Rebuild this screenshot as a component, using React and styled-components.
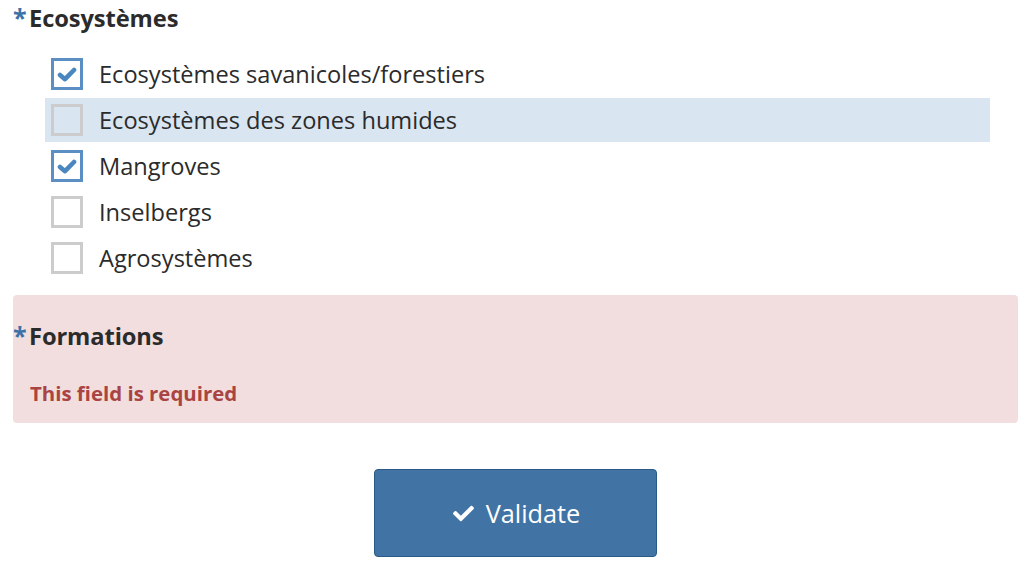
import React from "react";
import styled, { createGlobalStyle } from "styled-components";
import { FaCheck } from "react-icons/fa";

const GlobalStyle = createGlobalStyle`
    body {
        margin: 0;
        background: #fff;
        font-family: "Open Sans", "Noto Sans", sans-serif;
        color: #2b2b2b;
    }
`;

const Page = styled.div`
    padding: 0 6px 0 13px;
`;

const FieldLabel = styled.div`
    display: flex;
    align-items: baseline;
    height: 34px;
    font-size: 23.7px;
    font-weight: 700;
    line-height: 34px;
    letter-spacing: -0.1px;
    color: #2b2b2b;
`;

const Star = styled.span`
    color: #3a73a9;
    font-size: 25px;
    width: 17px;
    margin-right: -1px;
`;

const OptionList = styled.div`
    display: flex;
    flex-direction: column;
    gap: 2px;
    margin: 18px 28px 0 32px;
`;

const Option = styled.label`
    display: flex;
    align-items: center;
    height: 44px;
    padding-left: 6px;
    background: ${props => (props.highlighted ? "#d9e5f0" : "transparent")};
    font-size: 23.6px;
    color: #2b2b2b;
`;

const Box = styled.span`
    box-sizing: border-box;
    width: 32px;
    height: 32px;
    margin-right: 16px;
    border: 3px solid ${props => (props.checked ? "#5b8fc4" : "#cccccc")};
    display: flex;
    align-items: center;
    justify-content: center;
`;

const Tick = () => (
    <svg width="20" height="16" viewBox="0 0 20 16">
        <path d="M3 9 L8 13.2 L17 4" fill="none" stroke="#4a86c0" strokeWidth="4.6" strokeLinecap="round" strokeLinejoin="round" />
    </svg>
);

const ErrorPanel = styled.div`
    margin-top: 15px;
    height: 128px;
    box-sizing: border-box;
    padding-top: 23px;
    background: #f2dede;
    border-radius: 4px;
`;

const ErrorText = styled.div`
    margin: 27px 0 0 17px;
    font-size: 20.4px;
    font-weight: 700;
    color: #a94442;
`;

const Actions = styled.div`
    display: flex;
    justify-content: center;
    padding-top: 46px;
`;

const Button = styled.button`
    box-sizing: border-box;
    width: 283px;
    height: 88px;
    display: flex;
    align-items: center;
    justify-content: center;
    gap: 12px;
    background: #4174a4;
    border: 1px solid #2b5985;
    border-radius: 4px;
    color: #fff;
    font-family: "Open Sans", "Noto Sans", sans-serif;
    font-size: 25.3px;
    padding: 0 0 0 2px;
`;

const options = [
    { label: "Ecosystèmes savanicoles/forestiers", checked: true },
    { label: "Ecosystèmes des zones humides", checked: false, highlighted: true },
    { label: "Mangroves", checked: true },
    { label: "Inselbergs", checked: false },
    { label: "Agrosystèmes", checked: false },
];

const App = () => {
    return (
        <Page>
            <GlobalStyle />
            <FieldLabel>
                <Star>*</Star>Ecosystèmes
            </FieldLabel>
            <OptionList>
                {options.map(o => (
                    <Option key={o.label} highlighted={o.highlighted}>
                        <Box checked={o.checked}>{o.checked && <Tick />}</Box>
                        {o.label}
                    </Option>
                ))}
            </OptionList>
            <ErrorPanel>
                <FieldLabel>
                    <Star>*</Star>Formations
                </FieldLabel>
                <ErrorText>This field is required</ErrorText>
            </ErrorPanel>
            <Actions>
                <Button>
                    <FaCheck size={21} />
                    Validate
                </Button>
            </Actions>
        </Page>
    );
};

export default App;
